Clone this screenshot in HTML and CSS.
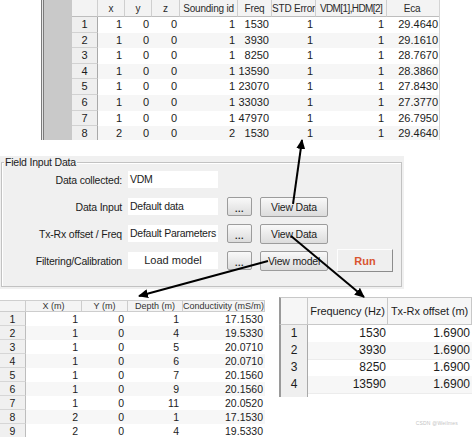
FILE: index.html
```html
<!DOCTYPE html>
<html>
<head>
<meta charset="utf-8">
<link rel="stylesheet" href="styles.css">
</head>
<body>
<div class="page">
  <section class="top">
    <div class="top-edge"></div>
    <div class="top-line"></div>
    <div class="top-fill"></div>
    <div class="t1">
      <div class="r hd"><span></span><span>x</span><span>y</span><span>z</span><span>Sounding id</span><span>Freq</span><span>STD Error</span><span class="tight">VDM[1],HDM[2]</span><span>Eca</span></div>
      <div class="r"><span class="n">1</span><span>1</span><span>0</span><span>0</span><span>1</span><span>1530</span><span>1</span><span>1</span><span>29.4640</span></div>
      <div class="r"><span class="n">2</span><span>1</span><span>0</span><span>0</span><span>1</span><span>3930</span><span>1</span><span>1</span><span>29.1610</span></div>
      <div class="r"><span class="n">3</span><span>1</span><span>0</span><span>0</span><span>1</span><span>8250</span><span>1</span><span>1</span><span>28.7670</span></div>
      <div class="r"><span class="n">4</span><span>1</span><span>0</span><span>0</span><span>1</span><span>13590</span><span>1</span><span>1</span><span>28.3860</span></div>
      <div class="r"><span class="n">5</span><span>1</span><span>0</span><span>0</span><span>1</span><span>23070</span><span>1</span><span>1</span><span>27.8430</span></div>
      <div class="r"><span class="n">6</span><span>1</span><span>0</span><span>0</span><span>1</span><span>33030</span><span>1</span><span>1</span><span>27.3770</span></div>
      <div class="r"><span class="n">7</span><span>1</span><span>0</span><span>0</span><span>1</span><span>47970</span><span>1</span><span>1</span><span>26.7950</span></div>
      <div class="r"><span class="n">8</span><span>2</span><span>0</span><span>0</span><span>2</span><span>1530</span><span>1</span><span>1</span><span>29.4640</span></div>
    </div>
  </section>

  <section class="panel">
    <div class="group">
      <span class="legend">Field Input Data</span>
      <div class="frow">
        <span class="lbl">Data collected:</span>
        <span class="tb">VDM</span>
      </div>
      <div class="frow">
        <span class="lbl">Data Input</span>
        <span class="tb">Default data</span>
        <button class="btn dots">...</button>
        <button class="btn view">View Data</button>
      </div>
      <div class="frow">
        <span class="lbl">Tx-Rx offset / Freq</span>
        <span class="tb">Default Parameters</span>
        <button class="btn dots">...</button>
        <button class="btn view">View Data</button>
      </div>
      <div class="frow">
        <span class="lbl">Filtering/Calibration</span>
        <span class="tb center">Load model</span>
        <button class="btn dots">...</button>
        <button class="btn view">View model</button>
        <button class="run">Run</button>
      </div>
    </div>
  </section>

  <section class="bottom">
    <div class="t2">
      <div class="r hd"><span></span><span>X (m)</span><span>Y (m)</span><span>Depth (m)</span><span>Conductivity (mS/m)</span></div>
      <div class="r"><span class="n">1</span><span>1</span><span>0</span><span>1</span><span>17.1530</span></div>
      <div class="r"><span class="n">2</span><span>1</span><span>0</span><span>4</span><span>19.5330</span></div>
      <div class="r"><span class="n">3</span><span>1</span><span>0</span><span>5</span><span>20.0710</span></div>
      <div class="r"><span class="n">4</span><span>1</span><span>0</span><span>6</span><span>20.0710</span></div>
      <div class="r"><span class="n">5</span><span>1</span><span>0</span><span>7</span><span>20.1560</span></div>
      <div class="r"><span class="n">6</span><span>1</span><span>0</span><span>9</span><span>20.1560</span></div>
      <div class="r"><span class="n">7</span><span>1</span><span>0</span><span>11</span><span>20.0520</span></div>
      <div class="r"><span class="n">8</span><span>2</span><span>0</span><span>1</span><span>17.1530</span></div>
      <div class="r"><span class="n">9</span><span>2</span><span>0</span><span>4</span><span>19.5330</span></div>
    </div>
    <div class="t3">
      <div class="r hd"><span></span><span>Frequency (Hz)</span><span>Tx-Rx offset (m)</span></div>
      <div class="r"><span class="n">1</span><span>1530</span><span>1.6900</span></div>
      <div class="r"><span class="n">2</span><span>3930</span><span>1.6900</span></div>
      <div class="r"><span class="n">3</span><span>8250</span><span>1.6900</span></div>
      <div class="r"><span class="n">4</span><span>13590</span><span>1.6900</span></div>
      <div class="r stub"><span class="n"></span></div>
    </div>
  </section>

  <div class="wm">CSDN @Weilmes</div>

  <svg class="arrows" width="474" height="437" viewBox="0 0 474 437">
    <defs>
      <marker id="ah" markerUnits="userSpaceOnUse" markerWidth="10" markerHeight="9" refX="9" refY="4.5" orient="auto">
        <path d="M0,0 L10,4.5 L0,9 Z" fill="#000"/>
      </marker>
    </defs>
    <line x1="293" y1="204" x2="302" y2="140" stroke="#000" stroke-width="2" marker-end="url(#ah)"/>
    <line x1="291" y1="236" x2="364" y2="297" stroke="#000" stroke-width="2" marker-end="url(#ah)"/>
    <line x1="268" y1="261" x2="139" y2="296" stroke="#000" stroke-width="2" marker-end="url(#ah)"/>
  </svg>
</div>
</body>
</html>
```

FILE: styles.css
```css
* { box-sizing: border-box; }
body { margin: 0; }
.page {
  position: relative;
  width: 474px;
  height: 437px;
  overflow: hidden;
  background: #fff;
  font-family: "Liberation Sans", Arial, sans-serif;
  color: #1c1c1c;
}

/* ---------- top table ---------- */
.top { display: flex; height: 156px; }
.top-edge { width: 41px; }
.top-line {
  width: 3px; height: 140px;
  border-left: 1px solid #7c7c7c;
  border-right: 1px solid #7c7c7c;
  background: #e6e6e6;
}
.top-fill { width: 28px; height: 140px; background: #c9c9c9; }
.t1 {
  width: 368px; height: 140px; overflow: hidden;
  border-right: 1px solid #d4d4d4;
}
.t1 .r {
  display: grid;
  grid-template-columns: 26px 27px 27px 28px 58px 34px 44px 71px 53px;
  height: 15.6px;
}
.t1 .r:nth-child(odd) > span { background: #f6f6f6; }
.t1 .r > span {
  font-size: 11px;
  line-height: 15.6px;
  text-align: right;
  padding-right: 3px;
  white-space: nowrap;
  overflow: hidden;
}
.t1 .r > span:last-child { padding-right: 2px; }
.t1 .hd { height: 17px; }
.t1 .hd > span {
  background: #f3f3f3 !important;
  border-right: 1px solid #cfcfcf;
  border-bottom: 1px solid #bdbdbd;
  text-align: center;
  padding: 0;
  font-size: 10px;
  line-height: 17px;
  letter-spacing: -0.2px;
  color: #2a2a2a;
}
.t1 .hd > span.tight { letter-spacing: -0.6px; }
.t1 .r > span.n {
  background: #efefef !important;
  border-right: 1px solid #a9a9a9;
  border-bottom: 1px solid #d2d2d2;
  text-align: center;
  padding: 0;
}

/* ---------- panel ---------- */
.panel {
  width: 404px;
  height: 133px;
  background: #f0f0f0;
  padding: 6px 2px 2px 1px;
}
.group {
  position: relative;
  height: 125px;
  border: 1px solid #c2c2c2;
  box-shadow: inset 1px 1px 0 #fff;
  padding-top: 3px;
}
.legend {
  position: absolute;
  top: -7px;
  left: 2px;
  font-size: 10.5px;
  line-height: 12px;
  letter-spacing: -0.2px;
  background: #f0f0f0;
  padding: 0 1px;
}
.frow { display: flex; align-items: center; height: 27px; }
.lbl {
  width: 120px;
  text-align: right;
  font-size: 10.5px;
  letter-spacing: -0.2px;
  white-space: nowrap;
}
.tb {
  margin-left: 6px;
  width: 90px;
  height: 17px;
  background: #fff;
  font-size: 10.5px;
  letter-spacing: -0.25px;
  line-height: 17px;
  padding-left: 2px;
  white-space: nowrap;
  overflow: hidden;
}
.tb.center { text-align: center; padding-left: 0; font-size: 11px; letter-spacing: 0; }
.btn {
  font-family: inherit;
  color: #1c1c1c;
  padding: 0;
  border: 1px solid #9c9c9c;
  border-radius: 2px;
  background: linear-gradient(#f9f9f9, #dcdcdc);
  font-size: 11px;
  text-align: center;
  white-space: nowrap;
}
.dots {
  margin-left: 9px;
  width: 25px;
  height: 19px;
  font-size: 9px;
  font-weight: bold;
  line-height: 22px;
  letter-spacing: 0.5px;
}
.view {
  margin-left: 8px; width: 68px; height: 20px; line-height: 18px;
  font-size: 10.5px; letter-spacing: -0.2px;
}
.run {
  margin-left: 9px;
  width: 56px;
  height: 23px;
  padding: 0;
  font-family: inherit;
  font-size: 11px;
  font-weight: bold;
  color: #d9552f;
  background: #efefef;
  border: 1px solid;
  border-color: #fdfdfd #8c8c8c #8c8c8c #fdfdfd;
}

/* ---------- bottom tables ---------- */
.bottom { display: flex; height: 148px; }

.t2 { margin-top: 11px; width: 265px; border-top: 1px solid #cfcfcf; }
.t2 .r {
  display: grid;
  grid-template-columns: 26px 56px 46px 55px 82px;
  height: 14px;
}
.t2 .r > span {
  font-size: 10.5px;
  line-height: 14px;
  text-align: right;
  padding-right: 4px;
  white-space: nowrap;
  overflow: hidden;
}
.t2 .r > span:last-child { padding-right: 2px; }
.t2 .r:nth-child(odd) > span { background: #f7f7f7; }
.t2 .hd { height: 11px; }
.t2 .hd > span {
  background: #f4f4f4 !important;
  border-right: 1px solid #cdcdcd;
  border-bottom: 1px solid #cdcdcd;
  font-size: 9px;
  line-height: 10px;
  text-align: center;
  padding: 0;
  color: #333;
}
.t2 .r > span.n {
  background: #f0f0f0 !important;
  border-right: 1px solid #bdbdbd;
  border-bottom: 1px solid #d6d6d6;
  text-align: center;
  padding: 0;
}

.t3 { margin-left: 14px; margin-top: 8px; width: 193px; }
.t3 .r {
  display: grid;
  grid-template-columns: 29px 80px 84px;
  height: 17px;
}
.t3 .r > span {
  font-size: 12px;
  line-height: 17px;
  text-align: right;
  padding-right: 2px;
  white-space: nowrap;
  border-bottom: 1px solid #ececec;
}
.t3 .r:nth-child(odd) > span { background: #f7f7f7; }
.t3 .hd { height: 28px; }
.t3 .hd > span {
  background: #f6f6f6 !important;
  border-top: 1px solid #c8c8c8;
  border-right: 1px solid #c8c8c8;
  border-bottom: 1px solid #c8c8c8;
  text-align: center;
  padding: 0;
  font-size: 11px;
  line-height: 26px;
  letter-spacing: -0.1px;
}
.t3 .r > span:first-child { border-left: 2px solid #9a9a9a; }
.t3 .r > span.n {
  background: #efefef !important;
  border-right: 1px solid #a9a9a9;
  border-bottom: 1px solid #d0d0d0;
  text-align: center;
  padding: 0;
}
.t3 .stub { height: 4px; }
.t3 .stub > span.n { border-bottom: none; }

/* ---------- overlays ---------- */
.wm {
  position: absolute;
  right: 16px;
  bottom: 11px;
  font-size: 5px;
  color: #c4c4c4;
  letter-spacing: 0.2px;
}
.arrows { position: absolute; left: 0; top: 0; pointer-events: none; }
```
